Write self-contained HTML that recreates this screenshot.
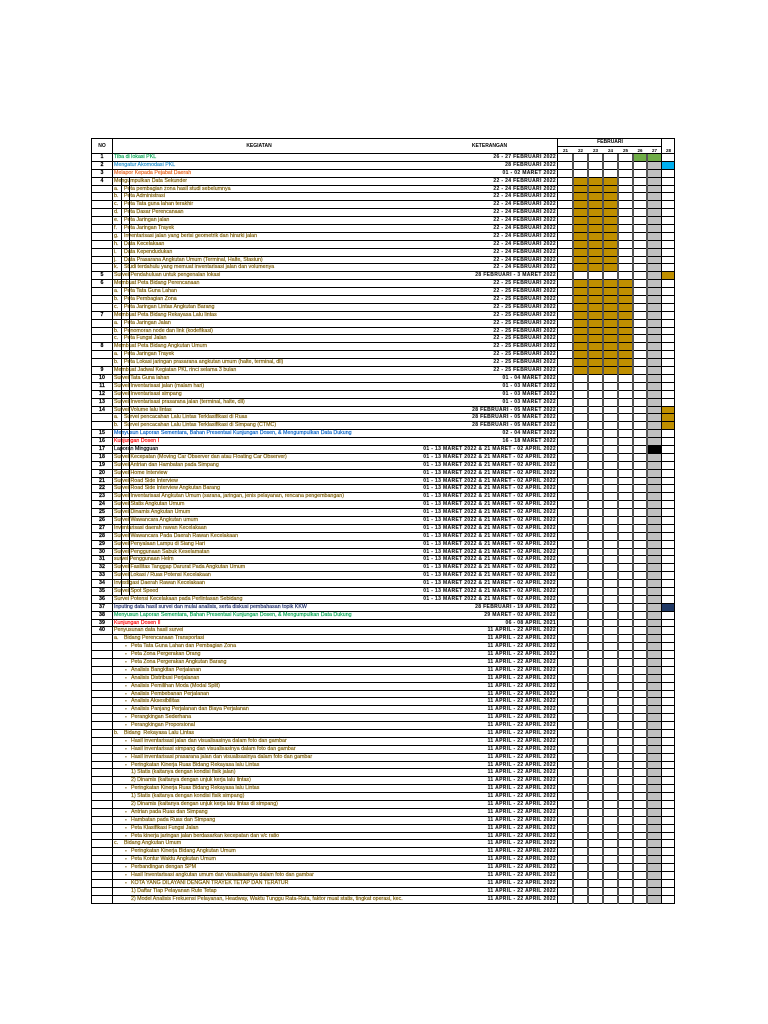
<!DOCTYPE html>
<html><head><meta charset="utf-8">
<style>
html,body{margin:0;padding:0;background:#fff;width:768px;height:1024px;overflow:hidden}
.t{position:absolute;left:91px;top:138px;width:584px;font-family:"Liberation Sans",sans-serif;border-top:1px solid #000}
.h{position:relative;height:15px;border-bottom:1px solid #000;box-sizing:border-box;font-weight:bold;font-size:5px}
.r{position:relative;height:7.9px;border-bottom:1px solid #000;box-sizing:border-box;font-size:5.3px;line-height:7px;white-space:nowrap;color:#7a5a00;-webkit-text-stroke:.15px}
.r span{position:absolute;top:0}
.n{left:0;width:22px;text-align:center;font-weight:bold;color:#000}
.k{left:23px}.a{left:23px}.x{left:33px}.d{left:34px;font-weight:bold}.y{left:40px}.z{left:40px}
.v{right:119px;font-weight:bold;color:#222;letter-spacing:.35px;font-size:5px;-webkit-text-stroke:.1px}
.f{position:absolute;top:0;bottom:0}
.G{background:#bf8f00}
.g{color:#00a650}.c{color:#1e90d0}.o{color:#e8641e}.bl{color:#0060c8}.rd{color:#f00}.bk{color:#000}.nv{color:#1a2a6a}
.vl{position:absolute;top:0;bottom:0;width:1px;background:#000}
.vg{position:absolute;top:15px;bottom:0;width:1.5px;background:#555}
.grey{position:absolute;left:556px;width:15px;top:22.9px;bottom:0;background:#c0c0c0}
</style></head><body>
<div class="t">
<div class="grey"></div>
<div class="h">
<span style="position:absolute;left:0;width:22px;top:4px;text-align:center">NO</span>
<span style="position:absolute;left:23px;width:290px;top:4px;text-align:center">KEGIATAN</span>
<span style="position:absolute;left:330px;width:137px;top:4px;text-align:center">KETERANGAN</span>
<span style="position:absolute;left:467px;width:104px;top:0;height:7px;border-bottom:1px solid #000;text-align:center;line-height:7px">FEBRUARI</span>
<span style="position:absolute;left:467px;top:8px;width:117px;display:flex;line-height:7px;font-size:4.5px"><i style="width:15px;text-align:center;font-style:normal">21</i><i style="width:15px;text-align:center;font-style:normal">22</i><i style="width:15px;text-align:center;font-style:normal">23</i><i style="width:15px;text-align:center;font-style:normal">24</i><i style="width:15px;text-align:center;font-style:normal">25</i><i style="width:14px;text-align:center;font-style:normal">26</i><i style="width:15px;text-align:center;font-style:normal">27</i><i style="width:13px;text-align:center;font-style:normal">28</i></span>
</div>
<div class="r"><span class="n">1</span><span class="k g">Tiba di lokasi PKL</span><span class="v">26 - 27 FEBRUARI 2022</span><div class="f" style="left:542px;width:29px;background:#70ad47"></div></div>
<div class="r"><span class="n">2</span><span class="k c">Mengatur Akomodasi PKL</span><span class="v">28 FEBRUARI 2022</span><div class="f" style="left:571px;width:13px;background:#00b0f0"></div></div>
<div class="r"><span class="n">3</span><span class="k o">Melapor Kepada Pejabat Daerah</span><span class="v">01 - 02 MARET 2022</span></div>
<div class="r"><span class="n">4</span><span class="k">Mengumpulkan Data Sekunder</span><span class="v">22 - 24 FEBRUARI 2022</span><div class="f G" style="left:482px;width:45px"></div></div>
<div class="r"><span class="a">a.</span><span class="x">Peta pembagian zona hasil studi sebelumnya</span><span class="v">22 - 24 FEBRUARI 2022</span><div class="f G" style="left:482px;width:45px"></div></div>
<div class="r"><span class="a">b.</span><span class="x">Peta Administrasi</span><span class="v">22 - 24 FEBRUARI 2022</span><div class="f G" style="left:482px;width:45px"></div></div>
<div class="r"><span class="a">c.</span><span class="x">Peta Tata guna lahan terakhir</span><span class="v">22 - 24 FEBRUARI 2022</span><div class="f G" style="left:482px;width:45px"></div></div>
<div class="r"><span class="a">d.</span><span class="x">Peta Dasar Perencanaan</span><span class="v">22 - 24 FEBRUARI 2022</span><div class="f G" style="left:482px;width:45px"></div></div>
<div class="r"><span class="a">e.</span><span class="x">Peta Jaringan jalan</span><span class="v">22 - 24 FEBRUARI 2022</span><div class="f G" style="left:482px;width:45px"></div></div>
<div class="r"><span class="a">f.</span><span class="x">Peta Jaringan Trayek</span><span class="v">22 - 24 FEBRUARI 2022</span><div class="f G" style="left:482px;width:45px"></div></div>
<div class="r"><span class="a">g.</span><span class="x">Inventarisasi jalan yang berisi geometrik dan hirarki jalan</span><span class="v">22 - 24 FEBRUARI 2022</span><div class="f G" style="left:482px;width:45px"></div></div>
<div class="r"><span class="a">h.</span><span class="x">Data Kecelakaan</span><span class="v">22 - 24 FEBRUARI 2022</span><div class="f G" style="left:482px;width:45px"></div></div>
<div class="r"><span class="a">i.</span><span class="x">Data Kependudukan</span><span class="v">22 - 24 FEBRUARI 2022</span><div class="f G" style="left:482px;width:45px"></div></div>
<div class="r"><span class="a">j.</span><span class="x">Data Prasarana Angkutan Umum (Terminal, Halte, Stasiun)</span><span class="v">22 - 24 FEBRUARI 2022</span><div class="f G" style="left:482px;width:45px"></div></div>
<div class="r"><span class="a">k.</span><span class="x">Studi terdahulu yang memuat inventarisasi jalan dan volumenya</span><span class="v">22 - 24 FEBRUARI 2022</span><div class="f G" style="left:482px;width:45px"></div></div>
<div class="r"><span class="n">5</span><span class="k">Survei Pendahuluan untuk pengenalan lokasi</span><span class="v">28 FEBRUARI - 3 MARET 2022</span><div class="f G" style="left:571px;width:13px"></div></div>
<div class="r"><span class="n">6</span><span class="k">Membuat Peta Bidang Perencanaan</span><span class="v">22 - 25 FEBRUARI 2022</span><div class="f G" style="left:482px;width:60px"></div></div>
<div class="r"><span class="a">a.</span><span class="x">Peta Tata Guna Lahan</span><span class="v">22 - 25 FEBRUARI 2022</span><div class="f G" style="left:482px;width:60px"></div></div>
<div class="r"><span class="a">b.</span><span class="x">Peta Pembagian Zona</span><span class="v">22 - 25 FEBRUARI 2022</span><div class="f G" style="left:482px;width:60px"></div></div>
<div class="r"><span class="a">c.</span><span class="x">Peta Jaringan Lintas Angkutan Barang</span><span class="v">22 - 25 FEBRUARI 2022</span><div class="f G" style="left:482px;width:60px"></div></div>
<div class="r"><span class="n">7</span><span class="k">Membuat Peta Bidang Rekayasa Lalu lintas</span><span class="v">22 - 25 FEBRUARI 2022</span><div class="f G" style="left:482px;width:60px"></div></div>
<div class="r"><span class="a">a.</span><span class="x">Peta Jaringan Jalan</span><span class="v">22 - 25 FEBRUARI 2022</span><div class="f G" style="left:482px;width:60px"></div></div>
<div class="r"><span class="a">b.</span><span class="x">Penomoran node dan link (kodefikasi)</span><span class="v">22 - 25 FEBRUARI 2022</span><div class="f G" style="left:482px;width:60px"></div></div>
<div class="r"><span class="a">c.</span><span class="x">Peta Fungsi Jalan</span><span class="v">22 - 25 FEBRUARI 2022</span><div class="f G" style="left:482px;width:60px"></div></div>
<div class="r"><span class="n">8</span><span class="k">Membuat Peta Bidang Angkutan Umum</span><span class="v">22 - 25 FEBRUARI 2022</span><div class="f G" style="left:482px;width:60px"></div></div>
<div class="r"><span class="a">a.</span><span class="x">Peta Jaringan Trayek</span><span class="v">22 - 25 FEBRUARI 2022</span><div class="f G" style="left:482px;width:60px"></div></div>
<div class="r"><span class="a">b.</span><span class="x">Peta Lokasi jaringan prasarana angkutan umum (halte, terminal, dll)</span><span class="v">22 - 25 FEBRUARI 2022</span><div class="f G" style="left:482px;width:60px"></div></div>
<div class="r"><span class="n">9</span><span class="k">Membuat Jadwal Kegiatan PKL rinci selama 3 bulan</span><span class="v">22 - 25 FEBRUARI 2022</span><div class="f G" style="left:482px;width:60px"></div></div>
<div class="r"><span class="n">10</span><span class="k">Survei Tata Guna lahan</span><span class="v">01 - 04 MARET 2022</span></div>
<div class="r"><span class="n">11</span><span class="k">Survei Inventarisasi jalan (malam hari)</span><span class="v">01 - 03 MARET 2022</span></div>
<div class="r"><span class="n">12</span><span class="k">Survei Inventarisasi simpang</span><span class="v">01 - 03 MARET 2022</span></div>
<div class="r"><span class="n">13</span><span class="k">Survei Inventarisasi prasarana jalan (terminal, halte, dll)</span><span class="v">01 - 03 MARET 2022</span></div>
<div class="r"><span class="n">14</span><span class="k">Survei Volume lalu lintas</span><span class="v">28 FEBRUARI - 05 MARET 2022</span><div class="f G" style="left:571px;width:13px"></div></div>
<div class="r"><span class="a">a.</span><span class="x">Survei pencacahan Lalu Lintas Terklasifikasi di Ruas</span><span class="v">28 FEBRUARI - 05 MARET 2022</span><div class="f G" style="left:571px;width:13px"></div></div>
<div class="r"><span class="a">b.</span><span class="x">Survei pencacahan Lalu Lintas Terklasifikasi di Simpang (CTMC)</span><span class="v">28 FEBRUARI - 05 MARET 2022</span><div class="f G" style="left:571px;width:13px"></div></div>
<div class="r"><span class="n">15</span><span class="k bl">Menyusun Laporan Sementara, Bahan Presentasi Kunjungan Dosen, &amp; Mengumpulkan Data Dukung</span><span class="v">02 - 04 MARET 2022</span></div>
<div class="r"><span class="n">16</span><span class="k rd">Kunjungan Dosen I</span><span class="v">16 - 18 MARET 2022</span></div>
<div class="r"><span class="n">17</span><span class="k bk">Laporan Mingguan</span><span class="v">01 - 13 MARET 2022 &amp; 21 MARET - 02 APRIL 2022</span><div class="f" style="left:556px;width:15px;background:#000"></div></div>
<div class="r"><span class="n">18</span><span class="k">Survei Kecepatan (Moving Car Observer dan atau Floating Car Observer)</span><span class="v">01 - 13 MARET 2022 &amp; 21 MARET - 02 APRIL 2022</span></div>
<div class="r"><span class="n">19</span><span class="k">Survei Antrian dan Hambatan pada Simpang</span><span class="v">01 - 13 MARET 2022 &amp; 21 MARET - 02 APRIL 2022</span></div>
<div class="r"><span class="n">20</span><span class="k">Survei Home Interview</span><span class="v">01 - 13 MARET 2022 &amp; 21 MARET - 02 APRIL 2022</span></div>
<div class="r"><span class="n">21</span><span class="k">Survei Road Side Interview</span><span class="v">01 - 13 MARET 2022 &amp; 21 MARET - 02 APRIL 2022</span></div>
<div class="r"><span class="n">22</span><span class="k">Survei Road Side Interview Angkutan Barang</span><span class="v">01 - 13 MARET 2022 &amp; 21 MARET - 02 APRIL 2022</span></div>
<div class="r"><span class="n">23</span><span class="k">Survei Inventarisasi Angkutan Umum (sarana, jaringan, jenis pelayanan, rencana pengembangan)</span><span class="v">01 - 13 MARET 2022 &amp; 21 MARET - 02 APRIL 2022</span></div>
<div class="r"><span class="n">24</span><span class="k">Survei Statis Angkutan Umum</span><span class="v">01 - 13 MARET 2022 &amp; 21 MARET - 02 APRIL 2022</span></div>
<div class="r"><span class="n">25</span><span class="k">Survei Dinamis Angkutan Umum</span><span class="v">01 - 13 MARET 2022 &amp; 21 MARET - 02 APRIL 2022</span></div>
<div class="r"><span class="n">26</span><span class="k">Survei Wawancara Angkutan umum</span><span class="v">01 - 13 MARET 2022 &amp; 21 MARET - 02 APRIL 2022</span></div>
<div class="r"><span class="n">27</span><span class="k">Inventarisasi daerah rawan Kecelakaan</span><span class="v">01 - 13 MARET 2022 &amp; 21 MARET - 02 APRIL 2022</span></div>
<div class="r"><span class="n">28</span><span class="k">Survei Wawancara Pada Daerah Rawan Kecelakaan</span><span class="v">01 - 13 MARET 2022 &amp; 21 MARET - 02 APRIL 2022</span></div>
<div class="r"><span class="n">29</span><span class="k">Survei Penyalaan Lampu di Siang Hari</span><span class="v">01 - 13 MARET 2022 &amp; 21 MARET - 02 APRIL 2022</span></div>
<div class="r"><span class="n">30</span><span class="k">Survei Penggunaan Sabuk Keselamatan</span><span class="v">01 - 13 MARET 2022 &amp; 21 MARET - 02 APRIL 2022</span></div>
<div class="r"><span class="n">31</span><span class="k">survei Penggunaan Helm</span><span class="v">01 - 13 MARET 2022 &amp; 21 MARET - 02 APRIL 2022</span></div>
<div class="r"><span class="n">32</span><span class="k">Survei Fasilitas Tanggap Darurat Pada Angkutan Umum</span><span class="v">01 - 13 MARET 2022 &amp; 21 MARET - 02 APRIL 2022</span></div>
<div class="r"><span class="n">33</span><span class="k">Survei Lokasi / Ruas Potensi Kecelakaan</span><span class="v">01 - 13 MARET 2022 &amp; 21 MARET - 02 APRIL 2022</span></div>
<div class="r"><span class="n">34</span><span class="k">Investigasi Daerah Rawan Kecelakaan</span><span class="v">01 - 13 MARET 2022 &amp; 21 MARET - 02 APRIL 2022</span></div>
<div class="r"><span class="n">35</span><span class="k">Survei Spot Speed</span><span class="v">01 - 13 MARET 2022 &amp; 21 MARET - 02 APRIL 2022</span></div>
<div class="r"><span class="n">36</span><span class="k">Survei Potensi Kecelakaan pada Perlintasan Sebidang</span><span class="v">01 - 13 MARET 2022 &amp; 21 MARET - 02 APRIL 2022</span></div>
<div class="r"><span class="n">37</span><span class="k nv">Inputing data hasil survei dan mulai analisis, serta diskusi pembahasan topik KKW</span><span class="v">28 FEBRUARI - 19 APRIL 2022</span><div class="f" style="left:571px;width:13px;background:#1f3864"></div></div>
<div class="r"><span class="n">38</span><span class="k g">Menyusun Laporan Sementara, Bahan Presentasi Kunjungan Dosen, &amp; Mengumpulkan Data Dukung</span><span class="v">29 MARET - 02 APRIL 2022</span></div>
<div class="r"><span class="n">39</span><span class="k rd">Kunjungan Dosen II</span><span class="v">06 - 08 APRIL 2021</span></div>
<div class="r"><span class="n">40</span><span class="k">Penyusunan data hasil survei</span><span class="v">11 APRIL - 22 APRIL 2022</span></div>
<div class="r"><span class="a">a.</span><span class="x">Bidang Perencanaan Transportasi</span><span class="v">11 APRIL - 22 APRIL 2022</span></div>
<div class="r"><span class="d">-</span><span class="y">Peta Tata Guna Lahan dan Pembagian Zona</span><span class="v">11 APRIL - 22 APRIL 2022</span></div>
<div class="r"><span class="d">-</span><span class="y">Peta Zona Pergerakan Orang</span><span class="v">11 APRIL - 22 APRIL 2022</span></div>
<div class="r"><span class="d">-</span><span class="y">Peta Zona Pergerakan Angkutan Barang</span><span class="v">11 APRIL - 22 APRIL 2022</span></div>
<div class="r"><span class="d">-</span><span class="y">Analisis Bangkitan Perjalanan</span><span class="v">11 APRIL - 22 APRIL 2022</span></div>
<div class="r"><span class="d">-</span><span class="y">Analisis Distribusi Perjalanan</span><span class="v">11 APRIL - 22 APRIL 2022</span></div>
<div class="r"><span class="d">-</span><span class="y">Analisis Pemilihan Moda (Modal Split)</span><span class="v">11 APRIL - 22 APRIL 2022</span></div>
<div class="r"><span class="d">-</span><span class="y">Analisis Pembebanan Perjalanan</span><span class="v">11 APRIL - 22 APRIL 2022</span></div>
<div class="r"><span class="d">-</span><span class="y">Analisis Aksesibilitas</span><span class="v">11 APRIL - 22 APRIL 2022</span></div>
<div class="r"><span class="d">-</span><span class="y">Analisis Panjang Perjalanan dan Biaya Perjalanan</span><span class="v">11 APRIL - 22 APRIL 2022</span></div>
<div class="r"><span class="d">-</span><span class="y">Perangkingan Sederhana</span><span class="v">11 APRIL - 22 APRIL 2022</span></div>
<div class="r"><span class="d">-</span><span class="y">Perangkingan Proporsional</span><span class="v">11 APRIL - 22 APRIL 2022</span></div>
<div class="r"><span class="a">b.</span><span class="x">Bidang&nbsp; Rekayasa Lalu Lintas</span><span class="v">11 APRIL - 22 APRIL 2022</span></div>
<div class="r"><span class="d">-</span><span class="y">Hasil inventarisasi jalan dan visualisasinya dalam foto dan gambar</span><span class="v">11 APRIL - 22 APRIL 2022</span></div>
<div class="r"><span class="d">-</span><span class="y">Hasil inventarisasi simpang dan visualisasinya dalam foto dan gambar</span><span class="v">11 APRIL - 22 APRIL 2022</span></div>
<div class="r"><span class="d">-</span><span class="y">Hasil inventarisasi prasarana jalan dan visualisasinya dalam foto dan gambar</span><span class="v">11 APRIL - 22 APRIL 2022</span></div>
<div class="r"><span class="d">-</span><span class="y">Peringkatan Kinerja Ruas Bidang Rekayasa lalu Lintas</span><span class="v">11 APRIL - 22 APRIL 2022</span></div>
<div class="r"><span class="z">1) Statis (kaitanya dengan kondisi fisik jalan)</span><span class="v">11 APRIL - 22 APRIL 2022</span></div>
<div class="r"><span class="z">2) Dinamis (kaitanya dengan unjuk kerja lalu lintas)</span><span class="v">11 APRIL - 22 APRIL 2022</span></div>
<div class="r"><span class="d">-</span><span class="y">Peringkatan Kinerja Ruas Bidang Rekayasa lalu Lintas</span><span class="v">11 APRIL - 22 APRIL 2022</span></div>
<div class="r"><span class="z">1) Statis (kaitanya dengan kondisi fisik simpang)</span><span class="v">11 APRIL - 22 APRIL 2022</span></div>
<div class="r"><span class="z">2) Dinamis (kaitanya dengan unjuk kerja lalu lintas di simpang)</span><span class="v">11 APRIL - 22 APRIL 2022</span></div>
<div class="r"><span class="d">-</span><span class="y">Antrian pada Ruas dan Simpang</span><span class="v">11 APRIL - 22 APRIL 2022</span></div>
<div class="r"><span class="d">-</span><span class="y">Hambatan pada Ruas dan Simpang</span><span class="v">11 APRIL - 22 APRIL 2022</span></div>
<div class="r"><span class="d">-</span><span class="y">Peta Klasifikasi Fungsi Jalan</span><span class="v">11 APRIL - 22 APRIL 2022</span></div>
<div class="r"><span class="d">-</span><span class="y">Peta kinerja jaringan jalan berdasarkan kecepatan dan v/c ratio</span><span class="v">11 APRIL - 22 APRIL 2022</span></div>
<div class="r"><span class="a">c.</span><span class="x">Bidang Angkutan Umum</span><span class="v">11 APRIL - 22 APRIL 2022</span></div>
<div class="r"><span class="d">-</span><span class="y">Peringkatan Kinerja Bidang Angkutan Umum</span><span class="v">11 APRIL - 22 APRIL 2022</span></div>
<div class="r"><span class="d">-</span><span class="y">Peta Kontur Waktu Angkutan Umum</span><span class="v">11 APRIL - 22 APRIL 2022</span></div>
<div class="r"><span class="d">-</span><span class="y">Perbandingan dengan SPM</span><span class="v">11 APRIL - 22 APRIL 2022</span></div>
<div class="r"><span class="d">-</span><span class="y">Hasil Inventarisasi angkutan umum dan visualisasinya dalam foto dan gambar</span><span class="v">11 APRIL - 22 APRIL 2022</span></div>
<div class="r"><span class="d">-</span><span class="y">KOTA YANG DILAYANI DENGAN TRAYEK TETAP DAN TERATUR</span><span class="v">11 APRIL - 22 APRIL 2022</span></div>
<div class="r"><span class="z">1) Daftar Tiap Pelayanan Rute Tetap</span><span class="v">11 APRIL - 22 APRIL 2022</span></div>
<div class="r"><span class="z">2) Model Analisis Frekuensi Pelayanan, Headway, Waktu Tunggu Rata-Rata, faktor muat statis, tingkat operasi, kec.</span><span class="v">11 APRIL - 22 APRIL 2022</span></div>
<div class="vl" style="left:0"></div>
<div class="vl" style="left:21px"></div>
<div class="vl" style="left:30px;top:38.7px;bottom:auto;height:418px"></div>
<div class="vl" style="left:38px;top:38.7px;bottom:auto;height:418px"></div>
<div class="vl" style="left:466px"></div>
<div class="vg" style="left:481px"></div>
<div class="vg" style="left:496px"></div>
<div class="vg" style="left:511px"></div>
<div class="vg" style="left:526px"></div>
<div class="vg" style="left:541px"></div>
<div class="vg" style="left:555px"></div>
<div class="vl" style="left:570px"></div>
<div class="vl" style="left:583px"></div>
</div>
</body></html>
